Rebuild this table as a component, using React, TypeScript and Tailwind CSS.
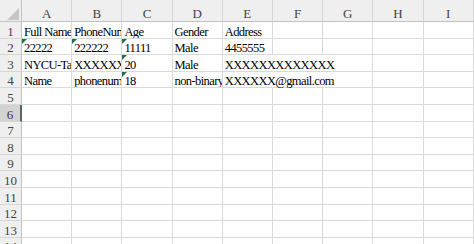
import React from "react";

// Excel-like sheet: row header + columns A..I, 13 full rows visible
const COLS = ["A", "B", "C", "D", "E", "F", "G", "H", "I"];

type Cell = { v: string; tri?: boolean; spill?: boolean };

const DATA: Record<number, Record<string, Cell>> = {
  1: {
    A: { v: "Full Name" },
    B: { v: "PhoneNum" },
    C: { v: "Age" },
    D: { v: "Gender" },
    E: { v: "Address" },
  },
  2: {
    A: { v: "22222", tri: true },
    B: { v: "222222", tri: true },
    C: { v: "11111", tri: true },
    D: { v: "Male" },
    E: { v: "4455555" },
  },
  3: {
    A: { v: "NYCU-Taiwan" },
    B: { v: "XXXXXXXXXX" },
    C: { v: "20", tri: true },
    D: { v: "Male" },
    E: { v: "XXXXXXXXXXXXX", spill: true },
  },
  4: {
    A: { v: "Name" },
    B: { v: "phonenum" },
    C: { v: "18", tri: true },
    D: { v: "non-binary" },
    E: { v: "XXXXXX@gmail.com", spill: true },
  },
};

const ROWS = Array.from({ length: 14 }, (_, i) => i + 1);

function Triangle() {
  return (
    <svg width="5" height="5" viewBox="0 0 5 5" className="absolute left-0 top-0">
      <polygon points="0,0 5,0 0,5" fill="#1e7145" />
    </svg>
  );
}

export default function App() {
  return (
    <div className="h-[244px] w-[474px] overflow-hidden bg-white [font-family:'Liberation_Serif','Times_New_Roman',serif]">
      {/* column header */}
      <div className="flex h-[22px] bg-[#efefef] border-b border-[#c3c3c3]">
        <div className="relative w-[22px] shrink-0 border-r border-[#c3c3c3]">
          <svg width="12" height="12" viewBox="0 0 12 12" className="absolute right-[2px] bottom-[1px]">
            <polygon points="12,0 12,12 0,12" fill="#c6c6c6" />
          </svg>
        </div>
        {COLS.map((c) => (
          <div
            key={c}
            className="flex w-[50.2px] shrink-0 items-end justify-center border-r border-[#d6d6d6] pb-[1px] text-[13px] leading-[12px] text-[#444]"
          >
            {c}
          </div>
        ))}
        <div className="flex-1" />
      </div>

      {ROWS.map((r) => {
        const row = DATA[r] ?? {};
        const sel = r === 6;
        return (
          <div key={r} className="flex h-[16.6px]">
            <div
              className={`flex w-[22px] shrink-0 items-end justify-center border-b border-[#d6d6d6] text-[13px] leading-[12px] ${
                sel
                  ? "bg-[#d3d3d3] border-r-2 border-r-[#4d6b58] text-[#333]"
                  : "bg-[#efefef] border-r border-r-[#c3c3c3] text-[#444]"
              }`}
            >
              {r}
            </div>
            {COLS.map((c) => {
              const cell = row[c];
              return (
                <div
                  key={c}
                  className={`relative flex w-[50.2px] shrink-0 items-end border-r border-b border-[#dadada] pl-[2px] text-[12.5px] leading-[12px] tracking-[-0.6px] text-black ${
                    cell?.spill ? "overflow-visible z-10" : "overflow-hidden"
                  }`}
                >
                  {cell?.tri && <Triangle />}
                  {cell &&
                    (cell.spill ? (
                      <div className="flex h-full w-max items-end whitespace-nowrap bg-white pr-[2px]">{cell.v}</div>
                    ) : (
                      <span className="whitespace-nowrap">{cell.v}</span>
                    ))}
                </div>
              );
            })}
            <div className="flex-1 border-b border-[#dadada]" />
          </div>
        );
      })}
    </div>
  );
}
